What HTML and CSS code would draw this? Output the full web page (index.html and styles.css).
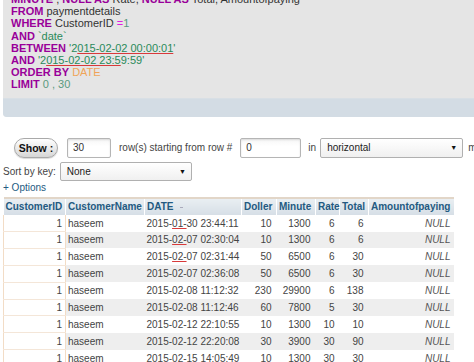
FILE: index.html
```html
<!DOCTYPE html>
<html>
<head>
<meta charset="utf-8">
<link rel="stylesheet" href="styles.css">
</head>
<body>
<div class="sqlbox">
  <div class="code">
    <div class="ln"><b class="kw">MINUTE</b> , <b class="kw">NULL AS</b> Rate, <b class="kw">NULL AS</b> Total, Amountofpaying</div>
    <div class="ln"><b class="kw">FROM</b> paymentdetails</div>
    <div class="ln"><b class="kw">WHERE</b> CustomerID <span class="op">=</span><span class="num">1</span></div>
    <div class="ln"><b class="kw">AND</b> <span class="str">`date`</span></div>
    <div class="ln"><b class="kw">BETWEEN</b> <span class="str">'2<span class="sp">015-02-02 00:00:01</span>'</span></div>
    <div class="ln"><b class="kw">AND</b> <span class="str">'2<span class="sp">015-02-02 23:5</span>9:59'</span></div>
    <div class="ln"><b class="kw">ORDER BY</b> <span class="fn">DATE</span></div>
    <div class="ln"><b class="kw">LIMIT</b> <span class="num">0 , 30</span></div>
  </div>
  <div class="strip"></div>
</div>

<div class="nav">
  <span class="show">Show :</span>
  <span class="field f30">30</span>
  <span class="lbl">row(s) starting from row #</span>
  <span class="field f0">0</span>
  <span class="lbl in">in</span>
  <span class="select smode">horizontal<span class="arrow">▼</span></span>
  <span class="lbl mode">mode</span>
</div>

<div class="sortrow">
  <span class="sortlbl">Sort by key:</span>
  <span class="select snone">None<span class="arrow">▼</span></span>
</div>

<div class="options">+ Options</div>

<table class="data">
  <colgroup>
    <col class="c1"><col class="c2"><col class="c3"><col class="c4"><col class="c5"><col class="c6"><col class="c7"><col class="c8">
  </colgroup>
  <thead>
    <tr>
      <th>CustomerID</th><th>CustomerName</th><th>DATE <span class="sortmark"></span></th><th>Doller</th><th>Minute</th><th>Rate</th><th>Total</th><th>Amountofpaying</th>
    </tr>
  </thead>
  <tbody>
    <tr><td class="id">1</td><td>haseem</td><td>2015-<span class="sp">01-</span>30 23:44:11</td><td class="n">10</td><td class="n">1300</td><td class="n">6</td><td class="n">6</td><td class="null">NULL</td></tr>
    <tr><td class="id">1</td><td>haseem</td><td>2015-<span class="sp">02-</span>07 02:30:04</td><td class="n">10</td><td class="n">1300</td><td class="n">6</td><td class="n">6</td><td class="null">NULL</td></tr>
    <tr><td class="id">1</td><td>haseem</td><td>2015-<span class="sp">02-</span>07 02:31:44</td><td class="n">50</td><td class="n">6500</td><td class="n">6</td><td class="n">30</td><td class="null">NULL</td></tr>
    <tr><td class="id">1</td><td>haseem</td><td>2015-02-07 02:36:08</td><td class="n">50</td><td class="n">6500</td><td class="n">6</td><td class="n">30</td><td class="null">NULL</td></tr>
    <tr><td class="id">1</td><td>haseem</td><td>2015-02-08 11:12:32</td><td class="n">230</td><td class="n">29900</td><td class="n">6</td><td class="n">138</td><td class="null">NULL</td></tr>
    <tr><td class="id">1</td><td>haseem</td><td>2015-02-08 11:12:46</td><td class="n">60</td><td class="n">7800</td><td class="n">5</td><td class="n">30</td><td class="null">NULL</td></tr>
    <tr><td class="id">1</td><td>haseem</td><td>2015-02-12 22:10:55</td><td class="n">10</td><td class="n">1300</td><td class="n">10</td><td class="n">10</td><td class="null">NULL</td></tr>
    <tr><td class="id">1</td><td>haseem</td><td>2015-02-12 22:20:08</td><td class="n">30</td><td class="n">3900</td><td class="n">30</td><td class="n">90</td><td class="null">NULL</td></tr>
    <tr><td class="id">1</td><td>haseem</td><td>2015-02-15 14:05:49</td><td class="n">10</td><td class="n">1300</td><td class="n">30</td><td class="n">30</td><td class="null">NULL</td></tr>
  </tbody>
</table>
</body>
</html>
```

FILE: styles.css
```css
html, body {
  margin: 0;
  width: 474px;
  height: 362px;
  overflow: hidden;
  background: #fff;
}
body {
  padding-left: 3px;
  box-sizing: border-box;
  font-family: "Liberation Sans", Arial, sans-serif;
  color: #333;
}

/* SQL box */
.sqlbox {
  background: #e5e5e5;
  border-bottom-left-radius: 4px;
  overflow: hidden;
}
.code {
  margin-top: -7px;
  padding: 0 0 7px 8px;
  font-size: 11px;
  line-height: 12.2px;
  color: #333;
  white-space: nowrap;
}
.kw { color: #990099; font-weight: bold; }
.op { color: #e020e0; }
.num { color: #5a9a80; }
.str { color: #2a8a5a; }
.fn { color: #f0a458; }
.sp {
  text-decoration: underline;
  text-decoration-color: #d83a3a;
  text-decoration-thickness: 1px;
  text-underline-offset: 1px;
}
.strip {
  height: 19px;
  background: #d3dce4;
  border-top: 1px solid #d8dfe5;
  box-sizing: border-box;
}

/* navigation */
.nav {
  margin-top: 21px;
  display: flex;
  align-items: center;
  height: 20px;
  font-size: 10px;
  white-space: nowrap;
  color: #444;
}
.nav > *, .sortrow > * { flex-shrink: 0; }
.show {
  margin-left: 11px;
  width: 44px;
  height: 20px;
  box-sizing: border-box;
  border: 1px solid #a9a9a9;
  border-radius: 10px;
  background: linear-gradient(#ffffff, #d6d6d6);
  font-weight: bold;
  font-size: 10.5px;
  color: #111;
  display: flex;
  align-items: center;
  justify-content: center;
  box-shadow: 0 1px 1px rgba(0,0,0,0.15);
}
.field {
  height: 20px;
  box-sizing: border-box;
  border: 1px solid #b5b5b5;
  border-radius: 2px;
  background: linear-gradient(#f6f6f6, #fff 40%);
  box-shadow: inset 0 1px 2px rgba(0,0,0,0.12);
  display: flex;
  align-items: center;
  padding-left: 5px;
  color: #333;
}
.f30 { margin-left: 9px; width: 44px; }
.lbl { margin-left: 8px; }
.f0 { margin-left: 8px; width: 61px; }
.in { margin-left: 7px; }
.select {
  height: 20px;
  box-sizing: border-box;
  border: 1px solid #b0b0b0;
  border-radius: 2px;
  background: linear-gradient(#ffffff, #f0f0f0);
  display: flex;
  align-items: center;
  padding-left: 6px;
  color: #222;
  position: relative;
}
.arrow {
  position: absolute;
  right: 5px;
  top: 5px;
  font-size: 7px;
  line-height: 8px;
  color: #111;
}
.smode { margin-left: 4px; width: 143px; }
.mode { margin-left: 5px; }

.sortrow {
  margin-top: 4px;
  display: flex;
  align-items: center;
  height: 19px;
  font-size: 10px;
  color: #444;
}
.snone { margin-left: 4px; width: 132px; height: 19px; }

.options {
  margin-top: 1px;
  font-size: 10px;
  line-height: 12px;
  color: #235a81;
}

/* table */
.data {
  margin-top: 3px;
  width: 450px;
  table-layout: fixed;
  border-collapse: collapse;
  border-top: 2px solid #e2d6c8;
  font-size: 10px;
  color: #444;
}
.c1 { width: 62px; }
.c2 { width: 79px; }
.c3 { width: 97px; }
.c4 { width: 35px; }
.c5 { width: 39px; }
.c6 { width: 24px; }
.c7 { width: 29px; }
.c8 { width: 85px; }
.data th {
  height: 16.5px;
  padding: 0 0 0 2px;
  text-align: left;
  font-weight: bold;
  color: #235a81;
  background: linear-gradient(#e9eef2, #d6dee6);
  border-left: 1px solid #fff;
  white-space: nowrap;
}
.data th:first-child { border-left: none; }
.sortmark {
  display: inline-block;
  width: 3px;
  height: 1px;
  background: #aab;
  margin-left: 4px;
  vertical-align: middle;
}
.data td {
  height: 15.9px;
  padding: 0 2px;
  white-space: nowrap;
  overflow: hidden;
}
.data tbody tr:nth-child(even) td { background: #eeeeee; }
.data td.id {
  background: #fff !important;
  text-align: right;
  padding-right: 3px;
  border-left: 1px solid #f2dcc6;
  border-right: 1px solid #f2dcc6;
  border-bottom: 1px solid #f4e6d8;
}
.data td.n { text-align: right; padding-right: 5px; }
.data td.null { text-align: right; font-style: italic; color: #555; padding-right: 3px; }
```
